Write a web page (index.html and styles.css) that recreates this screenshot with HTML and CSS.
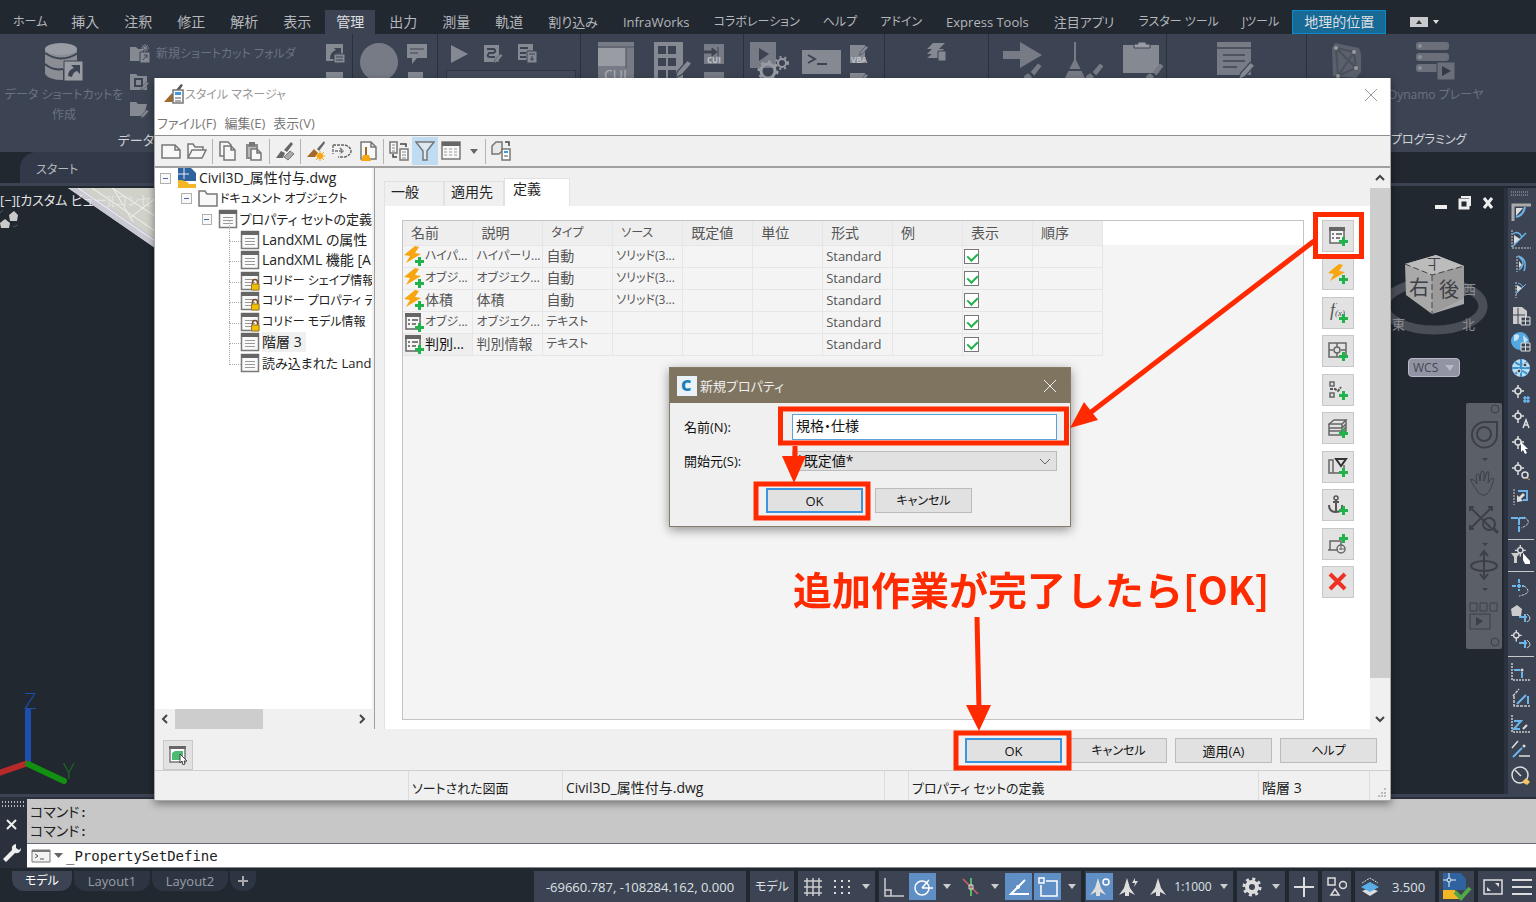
FILE: index.html
```
<!DOCTYPE html>
<html lang="ja">
<head>
  <meta charset="UTF-8" />
  <meta name="viewport" content="width=device-width, initial-scale=1.0"/>
  <title>スタイル マネージャ</title>
  <link rel="stylesheet" href="styles.css">
</head>
<body>

<!-- Shared icons -->
<svg class="defs" width="0" height="0">
  <symbol id="plus" viewBox="0 0 9 9"><path d="M3 0h3v3h3v3H6v3H3V6H0V3h3z" fill="#22b24c"/></symbol>
  <symbol id="list" viewBox="0 0 20 20">
    <path d="M1.500 1.500h17v17h-17z" fill="#fafafa" stroke="#7a7a7a" stroke-width="1.500"/><path d="M1 1h18v4H1z" fill="#666"/>
    <path d="M5 8.500h10M5 11.500h10M5 14.500h10" stroke="#999"/>
  </symbol>
  <symbol id="lock" viewBox="0 0 20 20">
    <use href="#list"/><path d="M12.500 13v-2a2.500 2.500 0 0 1 5 0v2" fill="none" stroke="#7a4a2a" stroke-width="1.500"/><path d="M11.500 13h7.500v6h-7.500z" fill="#f0c000" stroke="#a07820"/>
  </symbol>
  <symbol id="bolt" viewBox="0 0 20 20">
    <path d="M11 0L0 9l6 1-4 7L17 8l-6-1 4-6z" fill="#f9a510"/><use href="#plus" x="11" y="11" width="9" height="9"/>
  </symbol>
  <symbol id="prop" viewBox="0 0 20 20">
    <path d="M2 2h14v15H2z" fill="#f5f5f5" stroke="#666" stroke-width="1.500"/><path d="M1 1h16v4H1z" fill="#666"/>
    <path d="M4 8h2M8 8h6M4 12h2M8 12h4" stroke="#555" stroke-width="1.500"/><use href="#plus" x="11" y="11" width="9" height="9"/>
  </symbol>
  <symbol id="snap" viewBox="0 0 20 20">
    <circle cx="7" cy="7" r="3" fill="none" stroke="#ddd" stroke-width="1.500"/><path d="M7 1v3M7 10v4M1 7h3M10 7h3" stroke="#ddd" stroke-width="1.500"/>
  </symbol>
  <symbol id="pen" viewBox="0 0 20 20"><path d="M3 19l2-6L14 3l4 3-9 10z" fill="#858992" stroke="#3c4453"/></symbol>
  <symbol id="brush" viewBox="0 0 20 20"><path d="M1 19q4-2 5-6l3-2 3 3q-2 5-11 5z" fill="#777b85"/><path d="M11 10l6-7 3 2-6 8z" fill="#777b85"/></symbol>
  <symbol id="scale" viewBox="0 0 20 20"><path d="M10 1l3 10 5 7-6-3v4H8v-4l-6 3 5-7z" fill="#ddd"/></symbol>
</svg>

<div class="app">
  <nav class="tabs">
    <a href="#" class="kana">ホーム</a>
    <a href="#">挿入</a>
    <a href="#">注釈</a>
    <a href="#">修正</a>
    <a href="#">解析</a>
    <a href="#">表示</a>
    <a href="#" class="active">管理</a>
    <a href="#">出力</a>
    <a href="#">測量</a>
    <a href="#">軌道</a>
    <a href="#" class="mixed">割り込み</a>
    <a href="#" class="latin">InfraWorks</a>
    <a href="#" class="kana">コラボレーション</a>
    <a href="#" class="kana">ヘルプ</a>
    <a href="#" class="kana">アドイン</a>
    <a href="#" class="latin">Express Tools</a>
    <a href="#" class="mixed">注目アプリ</a>
    <a href="#" class="kana">ラスター ツール</a>
    <a href="#" class="kana">Jツール</a>
    <a href="#" class="geo">地理的位置</a>
    <svg class="min-icon" width="30" height="12"><path d="M1 1h18v10H1z" fill="#c8cacd"/><path d="M7 8l3-4 3 4z" fill="#333"/><path d="M24 4h6l-3 4z" fill="#ddd"/></svg>
  </nav>

  <div class="ribbon">
    <section class="panel w353">
      <div class="panel-body">
        <div class="big-btn">
          <svg width="40" height="40"><path d="M1 6v26q4 6 18 6V27h14V6z" fill="#8a8d94"/><ellipse cx="17" cy="7" rx="16" ry="6" fill="#999ca2"/><path d="M1 11q16 11 33 0M1 22q8 7 18 5" fill="none" stroke="#3c4453" stroke-width="2"/><path d="M20 19h19v20H20z" fill="#999ca2" stroke="#3c4453"/><path d="M24 34q0-6 6-8l-3-3h9v9l-3-3q-4 1-5 6z" fill="#3c4453"/></svg>
          <span>データ ショートカットを<br>作成</span>
        </div>
        <div class="rows">
          <div><svg width="20" height="20"><path d="M0 3h6l2 2h5v12H0z" fill="#858992"/><path d="M10 8h10v11H10z" fill="#858992" stroke="#3c4453"/><path d="M13 16l4-5M14 11h3v3" stroke="#3c4453" fill="none"/><path d="M15 0v8M11 4h8M12 1l6 6M18 1l-6 6" stroke="#858992"/></svg><span class="kana">新規ショートカット フォルダ</span></div>
          <div><svg width="20" height="20"><path d="M0 2h6l2 2h9v14H0z" fill="#858992"/><path d="M5 7h7v7H5z" fill="none" stroke="#3c4453" stroke-width="2"/><use href="#pen" x="9" y="8" width="11" height="11"/></svg></div>
          <div><svg width="20" height="20"><path d="M0 2h6l2 2h9l-3 12H0z" fill="#858992"/><use href="#pen" x="9" y="8" width="11" height="11"/></svg></div>
        </div>
        <div class="rows end">
          <div><svg width="20" height="20"><path d="M0 0h17v17H0z" fill="#858992"/><path d="M4 15q0-7 6-9L8 4h7v7l-2-2q-5 1-5 6z" fill="#3c4453"/><path d="M8 10h11v9H8z" fill="#858992" stroke="#3c4453"/><path d="M10 13h7M10 16h7" stroke="#3c4453"/></svg></div>
          <div><svg width="20" height="20"><path d="M0 0h17v17H0z" fill="#858992"/></svg></div>
        </div>
      </div>
      <h3>データ ショートカット</h3>
    </section>
    <section class="panel w85">
      <div class="panel-body">
        <svg width="40" height="40"><circle cx="20" cy="20" r="19" fill="#777b85"/></svg>
        <div class="rows">
          <div><svg width="20" height="20"><path d="M0 0h20v14H10l-5 6v-6H0z" fill="#858992"/><path d="M3 5h14M3 9h8" stroke="#3c4453"/></svg></div>
          <div><svg width="20" height="20"><path d="M1 0h15v18H1z" fill="#858992"/></svg></div>
        </div>
      </div>
    </section>
    <section class="panel w143">
      <div class="panel-body spread">
        <svg width="20" height="20"><path d="M1 1l17 9-17 9z" fill="#858992"/></svg>
        <svg width="20" height="20"><path d="M0 1h15v17H0z" fill="#858992"/><path d="M3 5h7q3 3-1 4H5q-3 4 1 4h5" fill="none" stroke="#3c4453" stroke-width="2"/><use href="#pen" x="8" y="8" width="12" height="12"/></svg>
        <svg width="20" height="20"><path d="M0 0h15v16H0z" fill="#858992"/><path d="M2 4h8M2 9h6M2 13h6" stroke="#3c4453" stroke-width="2"/><path d="M9 7h10v12H9z" fill="#858992" stroke="#3c4453"/><path d="M11 10h6M14 12v5M12 15h4" stroke="#3c4453"/></svg>
      </div>
      <div class="combo"></div>
    </section>
    <section class="panel w163">
      <div class="panel-body cui">
        <svg width="36" height="44"><path d="M0 0h36v44H0z" fill="#777b85"/><path d="M0 6h28v18H0z" fill="#999ca2"/><path d="M0 5h36M28 6v20" stroke="#4c525e"/><text x="6" y="38" class="ico-cui">CUI</text></svg>
        <svg width="40" height="44"><path d="M0 0h29v40H0z" fill="#858992"/><path d="M4 4h8v8H4zM14 4h8v8h-8zM4 16h8v8H4zM14 16h8v8h-8zM4 28h8v8H4zM14 28h8v8h-8z" fill="#3c4453"/><use href="#pen" x="18" y="14" width="22" height="24"/></svg>
        <div class="rows">
          <div><svg width="20" height="20"><path d="M0 0h20v20H0z" fill="#777b85"/><path d="M0 7h8V4l5 4-5 4V9H0zM14 3v9" fill="#3c4453" stroke="#3c4453"/><text x="3" y="19" class="ico-tiny">CUI</text></svg></div>
          <div><svg width="20" height="20"><path d="M0 0h20v20H0z" fill="#777b85"/></svg></div>
        </div>
      </div>
    </section>
    <section class="panel w141">
      <div class="panel-body">
        <svg width="40" height="44"><path d="M0 0h26v26H0z" fill="#777b85"/><path d="M9 6l10 6-10 7z" fill="#3c4453"/><circle cx="18" cy="29" r="7" fill="none" stroke="#999ca2" stroke-width="3"/><circle cx="18" cy="29" r="9" fill="none" stroke="#999ca2" stroke-width="3" stroke-dasharray="3 4"/><circle cx="32" cy="21" r="4" fill="none" stroke="#999ca2" stroke-width="2"/><circle cx="32" cy="21" r="6" fill="none" stroke="#999ca2" stroke-width="2" stroke-dasharray="2 3"/></svg>
        <svg class="cmd-icon" width="40" height="40"><path d="M0 8h39v24H0z" fill="#858992"/><path d="M6 13l7 4-7 4M15 22h10" fill="none" stroke="#3c4453" stroke-width="2"/></svg>
        <div class="rows">
          <div><svg width="20" height="20"><path d="M0 1h15v18H0z" fill="#858992"/><use href="#pen" x="7" y="0" width="13" height="12"/><text x="1" y="19" class="ico-tiny">VBA</text></svg></div>
          <div><svg width="20" height="20"><path d="M0 1h15v18H0z" fill="#858992"/><use href="#pen" x="7" y="0" width="13" height="12"/></svg></div>
        </div>
      </div>
    </section>
    <section class="panel w104">
      <div class="panel-body center"><svg width="20" height="20"><path d="M6 1h12l-6 6H0zM5 7h12l-5 5H0zM5 12h6v4H0z" fill="#858992"/><path d="M11 9h8v10h-8z" fill="#858992" stroke="#3c4453"/></svg></div>
    </section>
    <section class="panel w178">
      <div class="panel-body arrows">
        <svg width="40" height="40"><path d="M0 9h17V0l22 13-22 13v-9H0z" fill="#777b85"/><use href="#brush" x="14" y="18" width="25" height="24"/></svg>
        <svg width="40" height="40"><path d="M11 0h2v18l9 18H2l9-18z" fill="#777b85"/><path d="M4 28h15" stroke="#3c4453" stroke-width="2"/><use href="#brush" x="16" y="18" width="25" height="24"/></svg>
        <svg width="40" height="40"><path d="M0 3h36v28H0z" fill="#858992"/><path d="M11 6V2h4V0h8v2h4v4z" fill="#999ca2" stroke="#3c4453"/><use href="#brush" x="16" y="18" width="25" height="24"/></svg>
      </div>
    </section>
    <section class="panel w140">
      <div class="panel-body center"><svg width="40" height="40"><path d="M0 0h34v33H0z" fill="#777b85"/><path d="M0 6h34M6 13h22M6 19h22M6 25h14" stroke="#4c525e" stroke-width="2"/><use href="#pen" x="18" y="16" width="22" height="24"/></svg></div>
    </section>
    <section class="panel last">
      <div class="panel-body">
        <svg width="32" height="40"><path d="M1 6l3-5 24 5 2 6v18l-5 6-23-2z" fill="#5a606c"/><path d="M5 6l18 4 2 16-18 8zM5 6l20 20M23 10L7 34" fill="none" stroke="#4a505c" stroke-width="2"/><circle cx="5" cy="6" r="2" fill="#999"/><circle cx="23" cy="10" r="2" fill="#999"/><circle cx="25" cy="26" r="2" fill="#999"/><circle cx="7" cy="34" r="2" fill="#999"/></svg>
        <div class="big-btn">
          <svg width="40" height="40"><rect width="33" height="8" rx="3" fill="#6a6f7a"/><rect y="11" width="33" height="8" rx="3" fill="#6a6f7a"/><rect y="22" width="33" height="8" rx="3" fill="#6a6f7a"/><path d="M21 20h18v18H21z" fill="#6a6f7a" stroke="#3c4453"/><path d="M26 24l9 5-9 5z" fill="#333a48"/><g fill="#8c9099"><circle cx="4" cy="4" r="2"/><circle cx="4" cy="15" r="2"/><circle cx="4" cy="26" r="2"/></g></svg>
          <span>Dynamo プレーヤ</span>
        </div>
      </div>
      <h3>プログラミング</h3>
    </section>
  </div>

  <div class="file-tabs"><a href="#" class="kana">スタート</a></div>

  <main class="viewport">
    <svg class="model" width="90" height="62"><path d="M0 0h90v62z" fill="#d0d1c8"/><path d="M0 0h12l78 52v10z" fill="#c9c9d4"/><path d="M10 0l80 55M24 0l66 45M44 0l46 30M45 0l20 34M90 8L62 30" stroke="#f2f2f2" fill="none"/></svg>
    <div class="view-label">[−][カスタム ビュー][コンセ</div>
    <svg class="geo-icon" width="20" height="20"><path d="M9 5l5-4 4 4-1 6h-7zM0 13l5-4 5 4-1 5H1z" fill="#c9c9c9"/><path d="M0 3l3-3M13 17l5-2" stroke="#555"/></svg>
    <svg class="ucs" width="84" height="110">
      <text x="24" y="28" class="axis-z">Z</text>
      <path d="M28 82V30" stroke="#1c4fae" stroke-width="6" stroke-linecap="round"/>
      <path d="M28 82L-4 93" stroke="#b82a2a" stroke-width="6"/>
      <path d="M28 83l36 17" stroke="#129012" stroke-width="6" stroke-linecap="round"/>
      <text x="63" y="98" class="axis-y">Y</text>
    </svg>
    <div class="win-ctl">
      <svg width="64" height="16"><path d="M1 10h12v4H1z" fill="#eee"/><path d="M27 2h9v9" fill="none" stroke="#eee" stroke-width="2"/><path d="M26 5h8v8h-8z" fill="none" stroke="#eee" stroke-width="3"/><path d="M50 3l8 10M58 3l-8 10" stroke="#eee" stroke-width="3"/></svg>
    </div>
    <svg class="cube" width="120" height="100">
      <ellipse cx="54" cy="54" rx="49" ry="24" fill="none" stroke="#4a4e57" stroke-width="9"/>
      <path d="M25 12L56 3l28 11v38L52 62 26 43z" fill="#a9a9a9"/>
      <path d="M25 12L56 3l28 11-32 9z" fill="#bcbcbc"/><path d="M52 23v39l32-16V14z" fill="#9b9b9b"/>
      <path d="M25 12l27 11 32-9M52 23v39" fill="none" stroke="#444" stroke-dasharray="6 3"/>
      <text x="29" y="43" class="face">右</text><text x="59" y="45" class="face">後</text>
      <text x="-61" y="-7" class="face-top" transform="rotate(180)">上</text>
      <text x="83" y="42" class="ring">西</text><text x="82" y="77" class="ring">北</text><text x="12" y="77" class="ring">東</text>
    </svg>
    <button class="wcs">WCS<svg width="10" height="8"><path d="M0 1h9L5 7z" fill="#b9b9c4"/></svg></button>
    <div class="navbar">
      <svg width="36" height="246" fill="none" stroke="#3c4046" stroke-width="2">
        <circle cx="29" cy="6" r="4" stroke-width="1"/><path d="M6 32a13 13 0 0 1 13-13h12v13a12 12 0 0 1-25 0z"/><circle cx="18" cy="31" r="7"/>
        <path d="M10 86q-6-8-5-10 3 0 6 5l-1-9q2-3 3 0l1 6 1-9q2-2 3 0v9l3-9q2-1 2 1l-1 10 4-5q3 0 1 4-2 8-6 12-6 4-11-5z" stroke-width="1"/>
        <path d="M5 105l20 20M25 105L5 125M4 108v-4h4M22 104h4v4M4 122v4h4"/><circle cx="23" cy="121" r="6"/><path d="M27 125l5 5" stroke-width="3"/>
        <path d="M18 150v24M14 153l4-5 4 5M14 171l4 5 4-5"/><ellipse cx="18" cy="163" rx="13" ry="5"/>
        <path d="M4 200h7v8H4zM14 200h7v8h-7zM24 200h7v8h-7zM4 211h20v15H4z" stroke-width="1"/><path d="M10 214l7 4-7 5zM16 55h6l-3 3zM16 140h6l-3 3zM16 185h6l-3 3z" fill="#3c4046" stroke="none"/><circle cx="29" cy="239" r="4" stroke-width="1"/>
      </svg>
    </div>
    <div class="toolbox">
      <svg width="20" height="6" class="grip"><path d="M0 1h18M0 4h18" stroke="#aaa" stroke-dasharray="1 1"/></svg>
      <svg width="20" height="20"><path d="M2 18V2h18" fill="none" stroke="#aaa" stroke-width="3"/><path d="M5 14q7-1 9-10" fill="none" stroke="#6bb5ea" stroke-width="2"/><path d="M5 5h7l-7 8z" fill="#ddd"/></svg>
      <svg width="20" height="20"><path d="M1 1v18h19" fill="none" stroke="#ccc" stroke-dasharray="2 1"/><path d="M1 18L15 4M2 5q5-4 9 3" fill="none" stroke="#6bb5ea" stroke-width="1.500"/><path d="M3 6l6 4-6 5z" fill="#ddd"/></svg>
      <svg width="20" height="20"><path d="M6 2v16" stroke="#ccc" stroke-dasharray="2 1"/><path d="M8 3q8 6 0 13M7 2q10 3 6 15" fill="none" stroke="#6bb5ea" stroke-width="1.500"/><path d="M8 7l3 4-3 3z" fill="#ddd"/></svg>
      <svg width="20" height="20"><path d="M5 2v16" stroke="#ccc" stroke-dasharray="2 1"/><path d="M5 14L15 4M7 3q4 1 5 4" fill="none" stroke="#6bb5ea"/><path d="M6 5l5 3-5 4z" fill="#ddd"/></svg>
      <svg width="20" height="20"><path d="M2 1h9l5 4v13H2z" fill="#ccc"/><path d="M7 2v16M2 9h12" stroke="#3c4453"/><path d="M10 11h9v8h-9zM14.500 11v8M10 15h9" fill="#3c4453" stroke="#ddd"/></svg>
      <svg width="20" height="20"><circle cx="9" cy="9" r="9" fill="#53a8e2"/><path d="M3 3q6-2 5 2T3 9zM12 3l5 5-4 3z" fill="#cde4f2"/><path d="M10 11h9v8h-9zM14.500 11v8M10 15h9" fill="#3c4453" stroke="#ddd"/></svg>
      <svg width="20" height="20"><circle cx="10" cy="10" r="9" fill="#b8dcf2"/><path d="M1 10h18M10 1v18M4 4q6 6 12 0M4 16q6-6 12 0" fill="none" stroke="#3a94d2" stroke-width="2"/><circle cx="8" cy="13" r="2" fill="#3c4453" stroke="#eee"/><circle cx="14" cy="7" r="2" fill="#3c4453" stroke="#eee"/></svg>
      <svg width="20" height="20"><use href="#snap" width="20" height="20"/><path d="M14 12v7M17 12v7M12 14h7M12 17h7" stroke="#6bb5ea" stroke-width="1.500"/></svg>
      <svg width="20" height="20"><use href="#snap" width="20" height="20"/><path d="M12 19l3-8 3 8M13 16h4" fill="none" stroke="#ddd" stroke-width="1.500"/></svg>
      <svg width="20" height="20"><use href="#snap" width="20" height="20"/><path d="M10 7l7 7-3 0 2 4-2 1-2-4-2 2z" fill="#fff"/></svg>
      <svg width="20" height="20"><use href="#snap" width="20" height="20"/><circle cx="14" cy="14" r="3" fill="none" stroke="#ddd" stroke-width="1.500"/><path d="M16 17l3 2" stroke="#e0a040"/></svg>
      <svg width="20" height="20"><path d="M3 2v16" stroke="#ccc" stroke-dasharray="2 1"/><path d="M7 4h9v9h-4" fill="none" stroke="#6bb5ea" stroke-width="2"/><path d="M6 15V8l2 2 4-4 2 2-4 4 2 2z" fill="#ddd"/></svg>
      <svg width="20" height="20"><path d="M0 5h14M8 5v14" stroke="#6bb5ea" stroke-width="2" stroke-dasharray="7 1"/><path d="M13 4q10 6-3 11" fill="none" stroke="#ccc" stroke-dasharray="3 1"/></svg>
      <hr>
      <svg width="20" height="20"><use href="#snap" x="3" y="-1" width="18" height="18"/><path d="M0 8h9l-3 4v6H3v-6z" fill="#ccc"/><path d="M12 8l7 8v3h-5l-2-4z" fill="#fff"/></svg>
      <hr>
      <svg width="20" height="20"><path d="M1 8h12M8 1v12" stroke="#6bb5ea" stroke-width="2" stroke-dasharray="4 1"/><path d="M13 8q10 7-5 10" fill="none" stroke="#ccc" stroke-dasharray="3 1"/></svg>
      <svg width="20" height="20"><path d="M0 5l6-4 5 4-1 7H1z" fill="#ccc"/><path d="M8 13h8M14 10v8" stroke="#6bb5ea" stroke-width="2"/><path d="M16 10q6 5 0 8" fill="none" stroke="#ccc"/></svg>
      <svg width="20" height="20"><use href="#snap" x="-1" y="-1" width="18" height="18"/><path d="M8 13h8M14 10v8" stroke="#6bb5ea" stroke-width="2"/><path d="M16 10q6 5 0 8" fill="none" stroke="#ccc"/></svg>
      <hr>
      <svg width="20" height="20"><path d="M1 1v17h19" fill="none" stroke="#ccc" stroke-width="1.500" stroke-dasharray="2 1"/><path d="M3 8h6M11 10v6" stroke="#6bb5ea" stroke-width="2"/><circle cx="11" cy="8" r="1.500" fill="#ddd"/></svg>
      <svg width="20" height="20"><path d="M3 8v10h16M2 8l6-7" fill="none" stroke="#ccc" stroke-width="1.500" stroke-dasharray="3 1"/><path d="M6 16L15 7M17 8v8" stroke="#6bb5ea" stroke-width="2"/></svg>
      <svg width="20" height="20"><path d="M1 1v17h19" fill="none" stroke="#ccc" stroke-width="1.500" stroke-dasharray="2 1"/><path d="M3 7h7l-7 8h6" fill="none" stroke="#6bb5ea" stroke-width="2"/><path d="M12 15l4-4" stroke="#ddd" stroke-width="2"/></svg>
      <svg width="20" height="20"><path d="M1 8l6-7M8 16h11" stroke="#ddd" stroke-width="1.500"/><path d="M2 17L11 8" stroke="#6bb5ea" stroke-width="2"/><circle cx="13" cy="6" r="1.500" fill="#ddd"/></svg>
      <svg width="20" height="20"><circle cx="9" cy="9" r="8" fill="none" stroke="#ddd" stroke-width="1.500"/><path d="M4 4l6 6" stroke="#ddd" stroke-width="1.500"/><path d="M11 16l4-4 4 4-3 3z" fill="#f3c564"/></svg>
    </div>
  </main>

  <div class="command">
    <div class="cmd-side">
      <svg width="24" height="68"><path d="M2 5h22M2 9h22" stroke="#bbb" stroke-width="2" stroke-dasharray="1 2"/><path d="M7 23l9 9M16 23l-9 9" stroke="#eee" stroke-width="2"/><path d="M3 62l9-9q-1-5 4-6l0 4 3 2 2-2q0 6-6 5l-9 9z" fill="#eee"/></svg>
    </div>
    <div class="cmd-main">
      <div class="history">コマンド:<br>コマンド:</div>
      <div class="prompt">
        <svg width="32" height="14"><path d="M1 1h18v12H1z" fill="#f2f2f2" stroke="#777"/><path d="M1 2h18" stroke="#777" stroke-width="2"/><path d="M4 5l3 2-3 2M9 10h4" fill="none" stroke="#555"/><path d="M23 4h9l-4.500 5z" fill="#666"/></svg>
        <input type="text" value="_PropertySetDefine" aria-label="コマンド">
      </div>
    </div>
  </div>

  <footer class="status">
    <div class="layouts">
      <a href="#" class="active">モデル</a>
      <a href="#">Layout1</a>
      <a href="#">Layout2</a>
      <a href="#" class="add"><svg width="10" height="10"><path d="M5 0v10M0 5h10" stroke="#aaa" stroke-width="2"/></svg></a>
    </div>
    <div class="tools">
      <div class="group coords">-69660.787, -108284.162, 0.000</div>
      <div class="group model-btn">モデル</div>
      <div class="group">
        <i><svg width="20" height="20"><path d="M4 1v18M10 1v18M16 1v18M1 4h18M1 10h18M1 16h18" stroke="#ccc" stroke-width="1.500"/></svg></i>
        <i><svg width="20" height="20"><path d="M2 4h16M2 10h16M2 16h16" stroke="#ddd" stroke-width="2" stroke-dasharray="2 5"/></svg></i>
        <i class="car"></i>
      </div>
      <div class="group">
        <i><svg width="20" height="20"><path d="M1 1v18h19M1 13h6v6" fill="none" stroke="#ccc" stroke-width="1.500"/></svg></i>
        <i class="on"><svg width="20" height="20"><circle cx="9" cy="11" r="7" fill="none" stroke="#fff" stroke-width="1.500"/><path d="M9 11h11M9 11l7-8" stroke="#fff" stroke-width="1.500"/></svg></i>
        <i class="car"></i>
        <i><svg width="20" height="20"><path d="M10 1v18" stroke="#58b868" stroke-width="2"/><path d="M2 2l15 15" stroke="#d06068" stroke-width="1.500"/><path d="M8 8h4v4H8z" fill="none" stroke="#ddd"/></svg></i>
        <i class="car"></i>
        <i class="on"><svg width="20" height="20"><path d="M16 3L2 17h18" fill="none" stroke="#fff" stroke-width="2"/><circle cx="9" cy="10" r="2" fill="#fff"/></svg></i>
        <i class="on"><svg width="20" height="20"><path d="M3 8v11h16V4H8" fill="none" stroke="#fff" stroke-width="1.500"/><path d="M1 1h5v5H1z" fill="none" stroke="#fff" stroke-width="1.500"/></svg></i>
        <i class="car"></i>
      </div>
      <div class="group">
        <i class="on"><svg width="20" height="20"><use href="#scale" x="-2" width="20" height="20"/><circle cx="16" cy="5" r="3" fill="none" stroke="#fff" stroke-width="1.500"/></svg></i>
        <i><svg width="20" height="20"><use href="#scale" x="-2" width="20" height="20"/><path d="M16 1l-3 5h3l-1 4 4-6h-3z" fill="#ddd"/></svg></i>
        <i><svg width="20" height="20"><use href="#scale" width="20" height="20"/></svg></i>
        <span class="scale">1:1000</span>
        <i class="car"></i>
      </div>
      <div class="group">
        <i><svg width="20" height="20"><circle cx="10" cy="10" r="5" fill="none" stroke="#ddd" stroke-width="4"/><circle cx="10" cy="10" r="8" fill="none" stroke="#ddd" stroke-width="3" stroke-dasharray="3 3.280"/></svg></i>
        <i class="car"></i>
      </div>
      <div class="group"><i><svg width="20" height="20"><path d="M10 0v20M0 10h20" stroke="#ddd" stroke-width="2"/></svg></i></div>
      <div class="group"><i><svg width="20" height="20"><path d="M1 1h7v7H1zM4 18l4-6 4 6z" fill="none" stroke="#ddd" stroke-width="1.500"/><circle cx="16" cy="8" r="3.500" fill="none" stroke="#ddd" stroke-width="1.500"/></svg></i></div>
      <div class="group iso"><i><svg width="20" height="20"><path d="M2 6l8-5 8 5" fill="none" stroke="#ddd" stroke-dasharray="2 1"/><path d="M2 14l8 5 8-5-8-3z" fill="#ddd"/><path d="M1 10l9-5 9 5-9 5z" fill="#5aaee8"/></svg></i><span>3.500</span></div>
      <div class="group dwg"><svg width="30" height="28"><path d="M1 0h18l5 6v11H1z" fill="#2e63a0"/><path d="M1 17h12l4 9H1z" fill="#f3b726"/><path d="M7 0v14M1 7h13" stroke="#e8eef5"/><circle cx="7" cy="7" r="2" fill="#2e63a0" stroke="#e8eef5"/><path d="M13 19l6 6 9-10" fill="none" stroke="#53a846" stroke-width="4"/></svg></div>
      <div class="group">
        <i><svg width="20" height="16"><path d="M1 1h18v14H1z" fill="none" stroke="#ddd" stroke-width="1.500"/><path d="M4 8v4h4zM16 8V4h-4z" fill="#ddd"/></svg></i>
        <i><svg width="20" height="18"><path d="M0 2h20M0 9h20M0 16h20" stroke="#ddd" stroke-width="2"/></svg></i>
      </div>
    </div>
  </footer>
</div>

<!-- Style manager window -->
<div class="window">
  <div class="win-title">
    <svg width="22" height="22"><path d="M1 18L9 9l3 3v6z" fill="#a06a2c"/><path d="M13 6l5-6 2 1-4 6z" fill="#555"/><path d="M10 6h10v13H10z" fill="#fff" stroke="#777" stroke-width="1.500"/><path d="M12 8h6v3h-6z" fill="#3a9be0"/><path d="M12 14h6M12 17h6" stroke="#555"/></svg>
    <span>スタイル マネージャ</span>
    <svg class="close" width="14" height="14"><path d="M1 1l12 12M13 1L1 13" stroke="#999"/></svg>
  </div>
  <div class="win-menu"><span>ファイル(F)</span><span>編集(E)</span><span>表示(V)</span></div>
  <div class="toolbar">
    <i><svg width="20" height="20"><path d="M1 4h13l5 5v8H1zM14 4v5h5" fill="#f8f8f8" stroke="#777" stroke-width="1.500"/></svg></i>
    <i><svg width="20" height="20"><path d="M1 17V3h5l2 3h8v3M1 17L5 9h14l-4 8z" fill="#f8f8f8" stroke="#777" stroke-width="1.500"/></svg></i>
    <b></b>
    <i><svg width="20" height="20"><path d="M2 1h8l3 3v11H2z" fill="#f8f8f8" stroke="#777" stroke-width="1.500"/><path d="M6 5h7l4 4v10H6zM13 5v4h4" fill="#f8f8f8" stroke="#777" stroke-width="1.500"/></svg></i>
    <i><svg width="20" height="20"><path d="M2 3h12v15H2z" fill="#8a8a8a"/><path d="M5 1h6v4H5z" fill="#777"/><path d="M4 6h8v10H4z" fill="#b8b8b8"/><path d="M7 8h6l4 4v7H7zM13 8v4h4" fill="#f8f8f8" stroke="#777" stroke-width="1.500"/></svg></i>
    <b></b>
    <i><svg width="20" height="20"><path d="M1 17l5-7 4 2-2 5zM9 9l7-8 2 2-6 8z" fill="#666"/><path d="M9 16l6-6 4 3-6 6z" fill="#aaa" stroke="#777"/></svg></i>
    <b></b>
    <i><svg width="20" height="20"><path d="M1 16l7-8 4 4-3 4z" fill="#a06a2c"/><path d="M11 8l7-8 1 2-6 8z" fill="#666"/><circle cx="14" cy="15" r="3" fill="#f9a510"/><path d="M14 10v10M9 15h10M11 12l7 7M18 11l-8 8" stroke="#f9a510"/></svg></i>
    <i><svg width="20" height="20"><path d="M1 4h12q6 2 6 6t-6 6H6" fill="none" stroke="#666" stroke-width="1.500" stroke-dasharray="3 1"/><path d="M1 4v9M3 10h8M8 7l3 3-3 3" fill="none" stroke="#777" stroke-width="1.500" stroke-dasharray="3 1"/></svg></i>
    <i><svg width="20" height="20"><path d="M3 1h10l5 5v12H3zM13 1v5h5" fill="#f8f8f8" stroke="#777" stroke-width="1.500"/><path d="M8 6v9" stroke="#a06a2c" stroke-width="2"/><path d="M5 14h6l2 6H3z" fill="#f9a510"/></svg></i>
    <b></b>
    <i><svg width="20" height="20"><path d="M1 1h7v11H1zM11 8h8v11h-8z" fill="#f8f8f8" stroke="#777" stroke-width="1.500"/><path d="M3 4h3M3 7h3M3 10h3M13 11h4M13 14h4M13 17h4" stroke="#888"/><path d="M11 3h6v3M8 16H4v-3" fill="none" stroke="#444" stroke-width="1.500"/></svg></i>
    <i class="on"><svg width="20" height="20"><path d="M1 1h18l-7 9v9H8v-9z" fill="#dce9f3" stroke="#777" stroke-width="1.500"/></svg></i>
    <i><svg width="20" height="20"><path d="M1 1h18v17H1z" fill="#f8f8f8" stroke="#777" stroke-width="1.500"/><path d="M1 3h18" stroke="#666" stroke-width="4"/><path d="M3 8h14M3 11h14M3 14h14" stroke="#999" stroke-dasharray="3 2"/></svg></i>
    <i class="car"></i>
    <b></b>
    <i><svg width="20" height="20"><path d="M1 5l4-4h6v9l-3 3H1z" fill="#e8e8e8" stroke="#777" stroke-width="1.500"/><path d="M14 1h4v4" fill="none" stroke="#444" stroke-width="1.500"/><path d="M11 8h8v11h-8z" fill="#fff" stroke="#777" stroke-width="1.500"/><path d="M13 10h4v2h-4z" fill="#3a9be0"/><path d="M13 15h4" stroke="#555"/></svg></i>
  </div>

  <div class="win-main">
    <aside class="tree-pane">
      <ul class="tree">
        <li class="l0"><em></em><svg width="20" height="20"><path d="M1 0h13l5 5v8H1z" fill="#2e63a0"/><path d="M1 12q9 0 11 4l7 0v4H1z" fill="#f3b726"/><path d="M7 0v11M1 6h11" stroke="#e8eef5"/></svg>Civil3D_属性付与.dwg</li>
        <li class="l1"><em></em><svg width="20" height="20"><path d="M1 17V2h6l2 3h10v12z" fill="#f8f8f8" stroke="#777" stroke-width="1.500"/></svg><span class="kana">ドキュメント オブジェクト</span></li>
        <li class="l2"><em></em><svg width="20" height="20"><use href="#list"/></svg><span class="mixed">プロパティ セットの定義</span></li>
        <li class="l3"><svg width="20" height="20"><use href="#list"/></svg>LandXML の属性</li>
        <li class="l3"><svg width="20" height="20"><use href="#list"/></svg>LandXML 機能 [A</li>
        <li class="l3"><svg width="20" height="20"><use href="#lock"/></svg><span class="kana">コリドー シェイプ情報</span></li>
        <li class="l3"><svg width="20" height="20"><use href="#lock"/></svg><span class="kana">コリドー プロパティ デ</span></li>
        <li class="l3"><svg width="20" height="20"><use href="#lock"/></svg><span class="kana">コリドー モデル情報</span></li>
        <li class="l3 sel"><svg width="20" height="20"><use href="#list"/></svg><span>階層 3</span></li>
        <li class="l3"><svg width="20" height="20"><use href="#list"/></svg><span class="mixed">読み込まれた Land</span></li>
      </ul>
      <div class="hscroll">
        <svg width="20" height="20"><path d="M12 6l-4 4 4 4" fill="none" stroke="#444" stroke-width="2"/></svg><span></span><svg width="20" height="20"><path d="M8 6l4 4-4 4" fill="none" stroke="#444" stroke-width="2"/></svg>
      </div>
    </aside>
    <div class="content">
      <div class="page-tabs"><a href="#">一般</a><a href="#">適用先</a><a href="#" class="active">定義</a></div>
      <div class="page">
        <div class="grid">
          <table>
            <thead><tr><th>名前</th><th>説明</th><th class="kana">タイプ</th><th class="kana">ソース</th><th>既定値</th><th>単位</th><th>形式</th><th>例</th><th>表示</th><th>順序</th></tr></thead>
            <tbody>
              <tr><td><svg width="20" height="20"><use href="#bolt"/></svg><span class="kana">ハイパ...</span></td><td class="kana">ハイパーリ...</td><td>自動</td><td class="kana">ソリッド(3...</td><td></td><td></td><td class="latin">Standard</td><td></td><td><input type="checkbox" aria-label="表示" checked></td><td></td></tr>
              <tr><td><svg width="20" height="20"><use href="#bolt"/></svg><span class="kana">オブジ...</span></td><td class="kana">オブジェク...</td><td>自動</td><td class="kana">ソリッド(3...</td><td></td><td></td><td class="latin">Standard</td><td></td><td><input type="checkbox" aria-label="表示" checked></td><td></td></tr>
              <tr><td><svg width="20" height="20"><use href="#bolt"/></svg><span>体積</span></td><td>体積</td><td>自動</td><td class="kana">ソリッド(3...</td><td></td><td></td><td class="latin">Standard</td><td></td><td><input type="checkbox" aria-label="表示" checked></td><td></td></tr>
              <tr><td><svg width="20" height="20"><use href="#prop"/></svg><span class="kana">オブジ...</span></td><td class="kana">オブジェク...</td><td class="kana">テキスト</td><td></td><td></td><td></td><td class="latin">Standard</td><td></td><td><input type="checkbox" aria-label="表示" checked></td><td></td></tr>
              <tr><td class="sel"><svg width="20" height="20"><use href="#prop"/></svg><span>判別...</span></td><td>判別情報</td><td class="kana">テキスト</td><td></td><td></td><td></td><td class="latin">Standard</td><td></td><td><input type="checkbox" aria-label="表示" checked></td><td></td></tr>
            </tbody>
          </table>
        </div>
        <div class="side-btns">
          <button aria-label="手動プロパティ"><svg width="20" height="20"><use href="#prop"/></svg></button>
          <button aria-label="自動プロパティ"><svg width="20" height="20"><use href="#bolt"/></svg></button>
          <button aria-label="計算式"><svg width="20" height="20"><text x="2" y="13" class="fx">f</text><text x="7" y="13" class="fx-sub">(x)</text><use href="#plus" x="11" y="11" width="9" height="9"/></svg></button>
          <button aria-label="位置"><svg width="20" height="20"><path d="M1 2h17v14H1zM9 2v4M9 12v4M1 9h4M13 9h5" fill="none" stroke="#666" stroke-width="1.500"/><circle cx="9" cy="9" r="3" fill="none" stroke="#666" stroke-width="1.500"/><use href="#plus" x="11" y="11" width="9" height="9"/></svg></button>
          <button aria-label="分類"><svg width="20" height="20"><path d="M2 2h4v4H2zM2 13h4v4H2z" fill="none" stroke="#666" stroke-width="1.500"/><path d="M2 9h5l3 2 3-4" fill="none" stroke="#555" stroke-width="2" stroke-dasharray="3 1"/><use href="#plus" x="11" y="11" width="9" height="9"/></svg></button>
          <button aria-label="マテリアル"><svg width="20" height="20"><path d="M1 6l5-4h12l-4 4zM1 6v11h13V6M18 2v11l-4 4M1 10h13l4-4M1 13h13l4-4" fill="none" stroke="#666" stroke-width="1.500"/><use href="#plus" x="11" y="11" width="9" height="9"/></svg></button>
          <button aria-label="プロジェクト"><svg width="20" height="20"><path d="M1 3h4v13H1zM5 16h11V8" fill="none" stroke="#666" stroke-width="1.500"/><path d="M8 2h10l-5 7z" fill="none" stroke="#333" stroke-width="2"/><use href="#plus" x="11" y="11" width="9" height="9"/></svg></button>
          <button aria-label="アンカー"><svg width="20" height="20"><circle cx="8" cy="3" r="2" fill="none" stroke="#555" stroke-width="1.500"/><path d="M8 5v11M5 7h6M1 10q0 7 7 7t6-7" fill="none" stroke="#555" stroke-width="2"/><use href="#plus" x="11" y="11" width="9" height="9"/></svg></button>
          <button aria-label="図形"><svg width="20" height="20"><path d="M2 7h11v9H2zM0 16h10" fill="none" stroke="#666" stroke-width="1.500"/><circle cx="13" cy="15" r="4" fill="#e4e4e4" stroke="#666" stroke-width="1.500"/><path d="M11 15h5M13 12v4" stroke="#666"/><use href="#plus" x="11" y="0" width="9" height="9"/></svg></button>
          <button aria-label="削除"><svg width="20" height="20"><path d="M2 2l15 15M17 2L2 17" stroke="#ee3124" stroke-width="4"/></svg></button>
        </div>
      </div>
    </div>
    <div class="vscroll">
      <svg width="20" height="20"><path d="M6 12l4-4 4 4" fill="none" stroke="#444" stroke-width="2"/></svg><span></span><svg width="20" height="20"><path d="M6 8l4 4 4-4" fill="none" stroke="#444" stroke-width="2"/></svg>
    </div>
  </div>

  <div class="win-btns">
    <button class="pick" aria-label="選択"><svg width="20" height="20"><path d="M2 2h15v15H2z" fill="#fff" stroke="#777" stroke-width="1.500"/><path d="M1 1h17v3H1z" fill="#666"/><path d="M4 8l3-2h8v7l-2 2H4z" fill="#4cbb74"/><path d="M12 9l7 7h-3l1 3-2 1-1-4-2 2z" fill="#fff" stroke="#444"/></svg></button>
    <button class="btn default">OK</button>
    <button class="btn kana">キャンセル</button>
    <button class="btn mixed">適用(A)</button>
    <button class="btn kana">ヘルプ</button>
  </div>
  <div class="win-status">
    <span class="c1"></span><span class="c2 mixed">ソートされた図面</span><span class="c3">Civil3D_属性付与.dwg</span><span class="c4"></span><span class="c5 mixed">プロパティ セットの定義</span><span class="c6">階層 3</span>
    <span class="c7"><svg width="10" height="10"><path d="M6 1h2M3 5h5M0 8h8" stroke="#bbb" stroke-width="2" stroke-dasharray="2 1"/></svg></span>
  </div>
</div>

<!-- New property dialog -->
<form class="dialog" onsubmit="return false;">
  <div class="dlg-title">
    <svg width="20" height="20"><path d="M0 0h20v20H0z" fill="#e9f2f8"/><text x="4" y="15" class="logo">C</text></svg>
    <span class="mixed">新規プロパティ</span>
    <svg class="close" width="14" height="14"><path d="M1 1l12 12M13 1L1 13" stroke="#eee"/></svg>
  </div>
  <div class="dlg-row"><label for="propName">名前(N):</label><input type="text" id="propName" value="規格・仕様" autofocus></div>
  <div class="dlg-row"><label for="propSrc">開始元(S):</label>
    <select id="propSrc"><option>*既定値*</option></select>
  </div>
  <div class="dlg-btns"><button class="btn default">OK</button><button class="btn kana">キャンセル</button></div>
</form>

<!-- Callouts -->
<svg class="callouts" width="1400" height="800">
  <g fill="none" stroke="#ff2a00" stroke-width="5">
    <rect x="1315.500" y="214.500" width="46" height="42"/>
    <rect x="780.500" y="409" width="286" height="34"/>
    <rect x="756" y="484" width="112" height="34"/>
    <rect x="956" y="733" width="113" height="35"/>
    <path d="M1314 241L1086 416M795 446v14M977 617l2 92"/>
  </g>
  <path d="M1070 428l14-26 14 18zM782 456h24l-12 27zM966 705h25l-12 26z" fill="#ff2a00"/>
</svg>
<p class="note">追加作業が完了したら[OK]</p>

</body>
</html>
```
FILE: styles.css
```
* {
  box-sizing: border-box;
}

body {
  margin: 0;
  font-family: "Open Sans", "Noto Sans CJK JP", sans-serif;
  font-size: 14px;
  line-height: 20px;
  font-feature-settings: "palt";
  background: #212830;
  color: #222;
  overflow: hidden;
}

a {
  color: inherit;
  text-decoration: none;
}

i, em {
  font-style: normal;
}

svg {
  display: block;
  flex: none;
}

button, input, select {
  font: inherit;
  font-feature-settings: inherit;
  color: inherit;
  border-radius: 0;
  padding: 0;
  margin: 0;
}

.defs {
  position: absolute;
}

.kana {
  font-size: 12px;
}

.mixed, .latin {
  font-size: 13px;
}

.app {
  display: flex;
  flex-direction: column;
  height: 100vh;
}

/* Ribbon tabs */
.tabs {
  display: flex;
  align-items: flex-end;
  gap: 3px;
  height: 34px;
  padding-left: 3px;
  background: #222830;
  color: #b4b7bc;
  white-space: nowrap;
}

.tabs a {
  padding: 2px 11px;
  height: 24px;
}

.tabs .kana {
  padding: 2px 10px;
}

.tabs .active {
  background: #3c4453;
  color: #dcdee0;
}

.tabs .geo {
  background: #176a96;
  border: 1px solid #0e88c8;
  color: #dcdee0;
  padding-top: 1px;
}

.min-icon {
  margin: 0 0 6px 20px;
}

/* Ribbon */
.ribbon {
  display: flex;
  height: 118px;
  background: #3c4453;
  color: #6b7281;
}

.panel {
  display: flex;
  flex-direction: column;
  justify-content: space-between;
  flex: none;
  overflow: hidden;
  border-right: 1px solid #2a313d;
  white-space: nowrap;
}

.w353 { width: 353px; }
.w85 { width: 85px; }
.w143 { width: 143px; }
.w163 { width: 163px; }
.w141 { width: 141px; }
.w104 { width: 104px; }
.w178 { width: 178px; }
.w140 { width: 140px; }

.panel-body {
  display: flex;
  gap: 8px;
  padding: 8px 6px 0;
  overflow: hidden;
}

.panel-body.spread {
  padding: 10px 12px 6px;
  gap: 14px;
}

.panel-body.cui {
  padding-left: 17px;
  gap: 20px;
}

.panel-body.cui .rows {
  margin-left: -10px;
}

.cmd-icon {
  margin-left: 4px;
}

.panel-body.arrows {
  padding-left: 14px;
  gap: 20px;
}

.panel-body.center {
  justify-content: center;
}

.combo {
  flex: 1;
  margin: 0 4px 0 8px;
  background: #434b5b;
  border: 1px solid #2f3644;
}

.panel h3 {
  margin: 0;
  padding-bottom: 2px;
  font-size: 13px;
  font-weight: 400;
  text-align: center;
  color: #d0d2d6;
}

.panel.last {
  flex: 1;
  border: 0;
}

.last .panel-body {
  padding: 8px 0 0 24px;
  gap: 15px;
}

.panel.last h3 {
  padding-left: 84px;
  font-size: 12px;
  text-align: left;
}

.big-btn {
  display: flex;
  flex-direction: column;
  align-items: center;
  width: 116px;
  gap: 3px;
  font-size: 12px;
  text-align: center;
}

.rows {
  display: flex;
  flex-direction: column;
  gap: 8px;
  padding-top: 2px;
}

.rows div {
  display: flex;
  gap: 6px;
}

.rows.end {
  margin-left: auto;
}

.ico-cui {
  font-size: 14px;
  fill: #b0b2b8;
}

.ico-tiny {
  font-size: 8px;
  font-weight: 700;
  fill: #c0c2c8;
}

.file-tabs {
  height: 34px;
  background: #222830;
  border-bottom: 3px solid #3c4453;
}

.file-tabs a {
  display: block;
  width: 300px;
  height: 31px;
  margin-left: 20px;
  padding: 8px 16px;
  border-radius: 16px 0 0 0;
  background: #323948;
  color: #b4b7bc;
}

/* Drawing area */
.viewport {
  position: relative;
  flex: 1;
  background: #212830;
  border-bottom: 3px solid #3c4453;
}

.model {
  position: absolute;
  left: 68px;
  top: 2px;
}

.view-label {
  position: absolute;
  left: 0;
  top: 4px;
  font-size: 13px;
  white-space: nowrap;
  color: #e4e4e4;
}

.geo-icon {
  position: absolute;
  left: 0;
  top: 24px;
}

.ucs {
  position: absolute;
  left: 0;
  bottom: 3px;
}

.axis-z, .axis-y {
  font-family: "Open Sans", sans-serif;
  font-size: 22px;
  font-weight: 300;
  fill: #1c4fae;
}

.axis-y {
  fill: #1d6b25;
}

.win-ctl {
  position: absolute;
  top: 9px;
  right: 38px;
}

.cube {
  position: absolute;
  top: 66px;
  right: 36px;
}

.face {
  font-size: 20px;
  fill: #3d4046;
}

.face-top {
  font-size: 14px;
  fill: #3d4046;
}

.ring {
  font-size: 13px;
  fill: #8a8d92;
}

.wcs {
  position: absolute;
  top: 172px;
  right: 76px;
  display: flex;
  align-items: center;
  justify-content: space-between;
  width: 52px;
  height: 19px;
  padding: 0 4px;
  border: 1px solid #b9bac6;
  border-radius: 4px;
  background: #9294a3;
  color: #44474f;
  font-size: 12px;
}

.navbar {
  position: absolute;
  top: 217px;
  right: 34px;
  border-radius: 2px;
  background: #5b6067;
}

.toolbox {
  position: absolute;
  top: 2px;
  right: 0;
  bottom: 0;
  display: flex;
  flex-direction: column;
  align-items: center;
  justify-content: space-between;
  width: 32px;
  padding: 3px 2px 8px 0;
  border-left: 4px solid #2b323f;
  background: #3c4453;
}

.toolbox hr {
  width: 26px;
  margin: 0;
  border: 0;
  border-top: 1px solid #c8c8c8;
}

/* Command line */
.command {
  display: flex;
  height: 71px;
  background: #2a313d;
}

.cmd-side {
  width: 27px;
}

.cmd-main {
  flex: 1;
  display: flex;
  flex-direction: column;
  padding-top: 2px;
  font-family: "DejaVu Sans Mono", "Noto Sans CJK JP", monospace;
}

.history {
  height: 45px;
  padding: 4px 3px;
  background: #c7c7c7;
  border-bottom: 1px solid #666b74;
  line-height: 19px;
}

.prompt {
  flex: 1;
  display: flex;
  align-items: center;
  gap: 3px;
  padding-left: 4px;
  background: #fff;
  border-bottom: 1px solid #888;
}

.prompt input {
  flex: 1;
  border: 0;
  background: none;
}

/* Status bar */
.status {
  display: flex;
  justify-content: space-between;
  height: 34px;
  padding-top: 3px;
  background: #222830;
  color: #dfe1e4;
}

.layouts {
  display: flex;
  gap: 2px;
  padding-left: 12px;
  color: #9a9ea6;
  font-size: 13px;
}

.layouts a {
  width: 76px;
  height: 20px;
  border-radius: 0 0 12px 12px;
  background: #2e3542;
  text-align: center;
}

.layouts .active {
  width: 60px;
  background: #3c4453;
  color: #fff;
  font-size: 12px;
}

.layouts .add {
  display: flex;
  align-items: center;
  justify-content: center;
  width: 26px;
}

.tools {
  display: flex;
  gap: 4px;
  font-size: 13px;
}

.group {
  display: flex;
  align-items: center;
  height: 31px;
  background: #3c4453;
  white-space: nowrap;
}

.group i {
  display: flex;
  align-items: center;
  justify-content: center;
  width: 29px;
  height: 27px;
}

.group .on {
  background: #5f8fc4;
  border-left: 1px solid #3c4453;
  border-right: 1px solid #3c4453;
}

.group .car, .toolbar .car {
  width: 19px;
}

.car::before {
  content: "";
  border: 4px solid transparent;
  border-top: 5px solid #ccc;
  border-bottom: 0;
}

.coords {
  width: 212px;
  justify-content: center;
}

.model-btn {
  width: 44px;
  justify-content: center;
  font-size: 12px;
}

.scale {
  width: 42px;
  font-size: 12px;
  text-align: center;
}

.iso {
  width: 80px;
  gap: 8px;
}

.dwg {
  width: 35px;
  justify-content: center;
}

/* Style manager */
.window {
  position: absolute;
  left: 154px;
  right: 145px;
  top: 78px;
  bottom: 101px;
  display: flex;
  flex-direction: column;
  border: 1px solid #a8a8a8;
  border-top: 0;
  background: #f0f0f0;
  box-shadow: 0 3px 8px rgba(0, 0, 0, 0.4);
}

.win-title {
  display: flex;
  align-items: center;
  height: 34px;
  padding: 0 12px 0 8px;
  background: #fff;
  color: #999;
  font-size: 12px;
}

.close {
  margin-left: auto;
}

.win-menu {
  display: flex;
  gap: 8px;
  height: 23px;
  padding: 1px 2px;
  background: #fff;
  color: #777;
  font-size: 13px;
}

.toolbar {
  display: flex;
  align-items: center;
  height: 33px;
  padding-left: 3px;
  border-top: 1px solid #8f8f8f;
  border-bottom: 2px solid #a0a0a0;
}

.toolbar i {
  display: flex;
  align-items: center;
  justify-content: center;
  width: 26px;
  height: 28px;
}

.toolbar .on {
  background: #bfdcf2;
}

.toolbar b {
  width: 1px;
  height: 25px;
  margin: 0 2px;
  background: #b4b4b4;
}

.toolbar .car::before {
  border-top-color: #666;
}

.win-main {
  flex: 1;
  display: flex;
  min-height: 0;
}

.tree-pane {
  display: flex;
  flex-direction: column;
  justify-content: space-between;
  width: 217px;
  overflow: hidden;
  background: #fff;
}

.tree {
  display: flex;
  flex-direction: column;
  height: 205px;
  margin: 0;
  padding: 0;
  list-style: none;
  white-space: nowrap;
}

.tree li {
  position: relative;
  flex: 1;
  display: flex;
  align-items: center;
  gap: 2px;
}

.tree em {
  width: 11px;
  height: 11px;
  margin-right: 4px;
  border: 1px solid #b0b0b0;
  background: linear-gradient(#4a64b0, #4a64b0) center / 5px 1px no-repeat #f8f8f8;
}

.l0 { padding-left: 5px; }
.l1 { padding-left: 26px; }
.l2 { padding-left: 47px; }
.l3 { padding-left: 85px; }

.l3::before {
  content: "";
  position: absolute;
  left: 74px;
  top: -10px;
  width: 11px;
  height: 21px;
  border-left: 1px dotted #aaa;
  border-bottom: 1px dotted #aaa;
}

.tree .sel span {
  background: #f0f0f0;
  padding-right: 4px;
}

.hscroll, .vscroll {
  display: flex;
  background: #f0f0f0;
}

.hscroll span {
  width: 88px;
  margin-right: auto;
  background: #cdcdcd;
}

.vscroll {
  flex-direction: column;
  width: 20px;
}

.vscroll span {
  flex: 1;
  margin-bottom: 31px;
  background: #cdcdcd;
}

.content {
  flex: 1;
  display: flex;
  flex-direction: column;
  margin-left: 2px;
  padding-left: 9px;
  border-left: 1px solid #a0a0a0;
}

.page-tabs {
  display: flex;
  align-items: flex-end;
  height: 38px;
}

.page-tabs a {
  width: 60px;
  height: 25px;
  padding: 0 6px;
  border: 1px solid #e2e2e2;
  border-bottom: 0;
}

.page-tabs .active {
  width: 66px;
  height: 28px;
  padding: 0 8px;
  background: #fff;
}

.page {
  flex: 1;
  display: flex;
  gap: 18px;
  padding: 14px 16px 9px 17px;
  border-left: 1px solid #e2e2e2;
  background: #fff;
}

.grid {
  flex: 1;
  border: 1px solid #c4c4c8;
  background: linear-gradient(#fff 24px, #f4f4f4 24px);
}

.grid table {
  width: 700px;
  border-collapse: collapse;
  table-layout: fixed;
  color: #555;
}

.grid th, .grid td {
  height: 22px;
  padding: 0 0 0 3px;
  overflow: hidden;
  border-right: 1px solid #e6e6e6;
  border-bottom: 1px solid #e6e6e6;
  font-weight: 400;
  text-align: left;
  white-space: nowrap;
  background: #f4f4f4;
}

.grid th {
  height: 24px;
  padding-left: 8px;
  background: #eee;
}

.grid td svg, .grid td span {
  display: inline-block;
  vertical-align: top;
}

.grid td:first-child {
  padding-left: 1px;
}

.grid td:first-child svg {
  margin-right: 1px;
}

.grid .sel {
  color: #111;
  background: #eee;
}

.grid input {
  appearance: none;
  display: block;
  width: 15px;
  height: 15px;
  margin-left: -2px;
  border: 1px solid #777;
  background: #fff;
}

.grid input::after {
  content: "";
  display: block;
  width: 5px;
  height: 8px;
  margin: 1px 0 0 4px;
  border: solid #22b24c;
  border-width: 0 2px 2px 0;
  transform: rotate(45deg);
}

.side-btns {
  display: flex;
  flex-direction: column;
  justify-content: space-between;
  height: 378px;
}

.side-btns button, .pick {
  display: flex;
  align-items: center;
  justify-content: center;
  width: 32px;
  height: 32px;
  border: 1px solid #c8c8c8;
  background: #e2e2e2;
}

.fx, .fx-sub {
  font-family: "Liberation Serif", serif;
  font-size: 18px;
  font-style: italic;
  fill: #555;
}

.fx-sub {
  font-size: 9px;
}

.win-btns {
  display: flex;
  align-items: flex-start;
  gap: 8px;
  height: 41px;
  padding: 9px 13px 0 8px;
}

.pick {
  width: 30px;
  height: 30px;
  margin: 2px auto 0 0;
}

.btn {
  width: 97px;
  height: 25px;
  border: 1px solid #bbb;
  background: #e1e1e1;
  color: #111;
}

.btn.default {
  border: 2px solid #3c94dc;
  font-size: 13px;
}

.win-status {
  display: flex;
  height: 30px;
  border-top: 1px solid #cfcfcf;
  white-space: nowrap;
}

.win-status span {
  padding: 7px 3px 3px;
  border-right: 1px solid #dcdcdc;
}

.c1 { width: 254px; }
.c2 { width: 154px; }
.c3 { width: 322px; }
.c4 { width: 24px; }
.c5 { flex: 1; }
.c6 { width: 111px; }

.win-status .c7 {
  display: flex;
  align-items: flex-end;
  width: 20px;
  padding: 0 0 2px 8px;
  border: 0;
}

/* New property dialog */
.dialog {
  position: absolute;
  left: 669px;
  top: 367px;
  width: 402px;
  border: 1px solid #857b68;
  background: #f0f0f0;
  box-shadow: 0 3px 10px rgba(0, 0, 0, 0.4);
}

.dlg-title {
  display: flex;
  align-items: center;
  gap: 3px;
  height: 35px;
  margin-bottom: 11px;
  padding: 0 13px 0 7px;
  background: #7f745f;
  color: #eee;
}

.logo {
  font-size: 16px;
  font-weight: 800;
  fill: #1d7fb8;
}

.dlg-row {
  display: flex;
  align-items: center;
  height: 26px;
  margin-bottom: 8px;
  padding: 0 13px 0 14px;
  color: #111;
}

.dlg-row label {
  width: 108px;
  padding-bottom: 1px;
  font-size: 13px;
}

.dlg-row input {
  flex: 1;
  height: 26px;
  padding: 0 3px 4px;
  border: 1px solid #5aa2dc;
  outline: 0;
  background: #fff;
}

.dlg-row select {
  appearance: none;
  flex: 1;
  height: 20px;
  padding-left: 3px;
  border: 1px solid #bbb;
  background:
    linear-gradient(45deg, transparent 45%, #666 45%, #666 60%, transparent 60%) right 11px center / 5px 5px no-repeat,
    linear-gradient(-45deg, transparent 45%, #666 45%, #666 60%, transparent 60%) right 6px center / 5px 5px no-repeat,
    #e1e1e1;
  background:
    linear-gradient(45deg, transparent 42%, #666 42%, #666 58%, transparent 58%) right 11px center / 5px 5px no-repeat,
    linear-gradient(-45deg, transparent 42%, #666 42%, #666 58%, transparent 58%) right 6px center / 5px 5px no-repeat,
    #e1e1e1;
  line-height: 18px;
}

.dlg-btns {
  display: flex;
  gap: 12px;
  padding: 6px 0 13px 96px;
}

/* Callouts */
.callouts {
  position: absolute;
  left: 0;
  top: 0;
  pointer-events: none;
}

.note {
  position: absolute;
  left: 793px;
  top: 568px;
  margin: 0;
  font-family: "Noto Sans CJK JP", sans-serif;
  font-size: 39px;
  font-weight: 700;
  line-height: 40px;
  font-feature-settings: normal;
  white-space: nowrap;
  color: #ff2a00;
}
```
